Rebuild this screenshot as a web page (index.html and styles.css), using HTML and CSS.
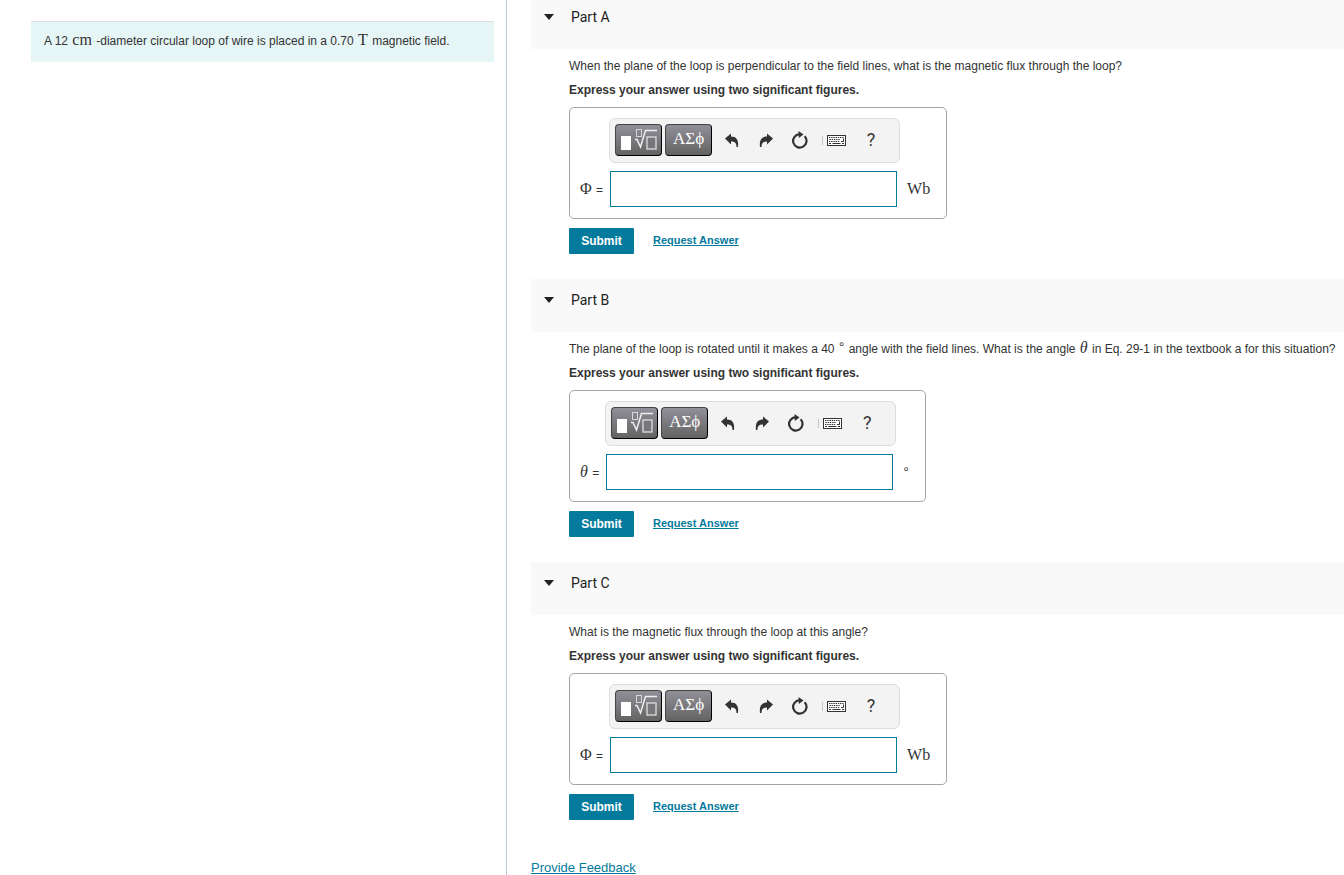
FILE: index.html
```html
<!DOCTYPE html>
<html lang="en">
<head>
    <meta charset="UTF-8">
    <meta name="viewport" content="width=device-width, initial-scale=1.0">
    <title>Magnetic Flux Through a Loop</title>
    <link rel="stylesheet" href="styles.css">
</head>
<body>

    <!-- Shared icons -->
    <svg class="icon-defs" aria-hidden="true">
        <symbol id="icon-templates" viewBox="0 0 36 22">
            <rect x="0" y="8" width="10" height="14" fill="#fff"/>
            <rect x="15.500" y="1.500" width="5" height="7" fill="none" stroke="#d8d8d8"/>
            <path d="M14 11.500h2l3.500 7.500 5-16.500h11.500" fill="none" stroke="#f0f0f0" stroke-width="1.500"/>
            <rect x="26" y="9" width="9" height="12" fill="#77777b" stroke="#d8d8d8" stroke-width="1.400"/>
        </symbol>
        <symbol id="icon-undo" viewBox="0 0 14 14">
            <path d="M0 5.500 6 0.500v3c5 0 8 3 7 10.500h-1.500c0-4-1.500-5.500-5.500-5.500v3z" fill="#333"/>
        </symbol>
        <symbol id="icon-redo" viewBox="0 0 14 14">
            <path d="M14 5.500 8 0.500v3c-5 0-8 3-7 10.500h1.500c0-4 1.500-5.500 5.500-5.500v3z" fill="#333"/>
        </symbol>
        <symbol id="icon-reset" viewBox="0 0 18 18">
            <path d="M13.600 5.200A6.700 6.700 0 1 1 8.500 3.200" fill="none" stroke="#333" stroke-width="2.200"/>
            <path d="M7.500 0 12.500 3.400 7.800 7z" fill="#333"/>
        </symbol>
        <symbol id="icon-keyboard" viewBox="0 0 26 12">
            <path d="M1.500 2v9" stroke="#c4c4c4"/>
            <rect x="6.500" y="1.500" width="18" height="10" fill="#fff" stroke="#333"/>
            <path d="M8 3.500h15M8.500 5.500h11M8 7.500h11" stroke="#333" stroke-dasharray="1.400 .8"/>
            <path d="M20 7.500h2.500v-3M8 9.500h2M11.500 9.500h8M21 9.500h2" fill="none" stroke="#333"/>
        </symbol>
    </svg>

    <div class="container">
        <div class="problem-pane">
            <p class="problem-text">A 12 <span class="math">cm</span> -diameter circular loop of wire is placed in a 0.70 <span class="math">T</span> magnetic field.</p>
        </div>

        <div class="parts-pane">
            <!-- Part A -->
            <section class="part">
                <h2 class="part-header"><button class="part-toggle"><span class="arrow"></span>Part A</button></h2>
                <form class="part-body">
                    <p class="question">When the plane of the loop is perpendicular to the field lines, what is the magnetic flux through the loop?</p>
                    <p class="instruction">Express your answer using two significant figures.</p>
                    <div class="answer-box">
                        <div class="toolbar">
                            <button type="button" class="palette-btn" aria-label="Templates"><svg width="36" height="22"><use href="#icon-templates"/></svg></button>
                            <button type="button" class="palette-btn">ΑΣϕ</button>
                            <div class="tools">
                                <button type="button" class="tool-btn" aria-label="Undo"><svg width="14" height="14"><use href="#icon-undo"/></svg></button>
                                <button type="button" class="tool-btn" aria-label="Redo"><svg width="14" height="14"><use href="#icon-redo"/></svg></button>
                                <button type="button" class="tool-btn" aria-label="Reset"><svg width="18" height="18"><use href="#icon-reset"/></svg></button>
                                <button type="button" class="tool-btn" aria-label="Keyboard shortcuts"><svg width="26" height="12"><use href="#icon-keyboard"/></svg></button>
                                <button type="button" class="tool-btn help">?</button>
                            </div>
                        </div>
                        <label class="answer-label" for="answer-a"><span class="math">Φ</span> =</label>
                        <input id="answer-a" class="answer-input" type="text">
                        <span class="unit math">Wb</span>
                    </div>
                    <div class="actions">
                        <button type="button" class="submit-btn">Submit</button>
                        <a class="request-link" href="#">Request Answer</a>
                    </div>
                </form>
            </section>

            <!-- Part B -->
            <section class="part">
                <h2 class="part-header"><button class="part-toggle"><span class="arrow"></span>Part B</button></h2>
                <form class="part-body">
                    <p class="question">The plane of the loop is rotated until it makes a 40 <sup class="degree">∘</sup> angle with the field lines. What is the angle <i class="math">θ</i> in Eq. 29-1 in the textbook a for this situation?</p>
                    <p class="instruction">Express your answer using two significant figures.</p>
                    <div class="answer-box">
                        <div class="toolbar">
                            <button type="button" class="palette-btn" aria-label="Templates"><svg width="36" height="22"><use href="#icon-templates"/></svg></button>
                            <button type="button" class="palette-btn">ΑΣϕ</button>
                            <div class="tools">
                                <button type="button" class="tool-btn" aria-label="Undo"><svg width="14" height="14"><use href="#icon-undo"/></svg></button>
                                <button type="button" class="tool-btn" aria-label="Redo"><svg width="14" height="14"><use href="#icon-redo"/></svg></button>
                                <button type="button" class="tool-btn" aria-label="Reset"><svg width="18" height="18"><use href="#icon-reset"/></svg></button>
                                <button type="button" class="tool-btn" aria-label="Keyboard shortcuts"><svg width="26" height="12"><use href="#icon-keyboard"/></svg></button>
                                <button type="button" class="tool-btn help">?</button>
                            </div>
                        </div>
                        <label class="answer-label" for="answer-b"><i class="math">θ</i> =</label>
                        <input id="answer-b" class="answer-input" type="text">
                        <span class="unit"><sup class="degree">∘</sup></span>
                    </div>
                    <div class="actions">
                        <button type="button" class="submit-btn">Submit</button>
                        <a class="request-link" href="#">Request Answer</a>
                    </div>
                </form>
            </section>

            <!-- Part C -->
            <section class="part">
                <h2 class="part-header"><button class="part-toggle"><span class="arrow"></span>Part C</button></h2>
                <form class="part-body">
                    <p class="question">What is the magnetic flux through the loop at this angle?</p>
                    <p class="instruction">Express your answer using two significant figures.</p>
                    <div class="answer-box">
                        <div class="toolbar">
                            <button type="button" class="palette-btn" aria-label="Templates"><svg width="36" height="22"><use href="#icon-templates"/></svg></button>
                            <button type="button" class="palette-btn">ΑΣϕ</button>
                            <div class="tools">
                                <button type="button" class="tool-btn" aria-label="Undo"><svg width="14" height="14"><use href="#icon-undo"/></svg></button>
                                <button type="button" class="tool-btn" aria-label="Redo"><svg width="14" height="14"><use href="#icon-redo"/></svg></button>
                                <button type="button" class="tool-btn" aria-label="Reset"><svg width="18" height="18"><use href="#icon-reset"/></svg></button>
                                <button type="button" class="tool-btn" aria-label="Keyboard shortcuts"><svg width="26" height="12"><use href="#icon-keyboard"/></svg></button>
                                <button type="button" class="tool-btn help">?</button>
                            </div>
                        </div>
                        <label class="answer-label" for="answer-c"><span class="math">Φ</span> =</label>
                        <input id="answer-c" class="answer-input" type="text">
                        <span class="unit math">Wb</span>
                    </div>
                    <div class="actions">
                        <button type="button" class="submit-btn">Submit</button>
                        <a class="request-link" href="#">Request Answer</a>
                    </div>
                </form>
            </section>

            <a class="feedback-link" href="#">Provide Feedback</a>
        </div>
    </div>

</body>
</html>
```
FILE: styles.css
```css
* {
    box-sizing: border-box;
}

body {
    margin: 0;
    font-family: 'Liberation Sans', Arial, sans-serif;
    font-size: 12px;
    color: #333;
    background-color: #fff;
}

p,
h2 {
    margin: 0;
}

button {
    font-family: inherit;
    padding: 0;
    cursor: pointer;
}

.icon-defs {
    display: none;
}

.container {
    display: grid;
    grid-template-columns: 507px minmax(0, 1fr);
    min-height: 100vh;
}

/* Left side */
.problem-pane {
    padding: 21px 12px 0 31px;
    border-right: 1px solid #b4c8d8;
}

.problem-text {
    padding: 7px 13px 9px;
    line-height: 24px;
    border-top: 1px solid #d9dede;
    background-color: #e6f5f6;
}

.math {
    padding: 0 1px;
    font-family: 'Liberation Serif', 'Times New Roman', serif;
    font-size: 16px;
    line-height: 1;
}

/* Right side */
.parts-pane {
    padding-left: 24px;
    overflow: hidden;
}

.part-header {
    padding: 11px 12px 22px;
    background-color: #f9f9f9;
}

.part:first-child .part-header {
    padding-top: 7px;
}

.part-toggle {
    display: flex;
    align-items: center;
    gap: 17px;
    height: 20px;
    border: none;
    background: none;
    color: #222;
    font-family: Roboto, sans-serif;
    font-size: 14px;
}

.arrow {
    margin-left: 1px;
    border: 5px solid transparent;
    border-top: 6px solid #222;
    border-bottom: none;
}

.part-body {
    padding: 5px 0 25px 38px;
}

.question,
.instruction {
    height: 24px;
    line-height: 24px;
    white-space: nowrap;
}

.instruction {
    font-weight: bold;
}

.degree {
    font-family: 'DejaVu Sans', sans-serif;
    font-size: 12px;
    line-height: 1;
}

.answer-box {
    display: inline-grid;
    grid-template-columns: auto auto auto;
    align-items: center;
    gap: 8px 6px;
    margin-top: 5px;
    padding: 10px 15px 11px 9px;
    border: 1px solid #a5a5a5;
    border-radius: 5px;
    vertical-align: top;
}

.toolbar {
    grid-column: 2;
    display: flex;
    align-items: center;
    gap: 3px;
    width: 291px;
    height: 45px;
    padding: 0 5px 2px;
    border: 1px solid #ddd;
    border-radius: 6px;
    background-color: #f3f3f3;
}

.palette-btn {
    display: flex;
    align-items: center;
    justify-content: center;
    width: 47px;
    height: 32px;
    padding-bottom: 2px;
    border: 1px solid #000;
    border-top-color: #444;
    border-left-color: #444;
    border-radius: 4px;
    background: linear-gradient(#918f98, #636363);
    color: #fff;
    font-family: 'Liberation Serif', serif;
    font-size: 17px;
}

.tools {
    display: flex;
    align-items: center;
}

.tool-btn {
    display: flex;
    align-items: center;
    justify-content: center;
    width: 34px;
    height: 32px;
    border: none;
    background: none;
    color: #333;
}

.help {
    width: 40px;
    font-family: Roboto, sans-serif;
    font-size: 18px;
}

.answer-label {
    grid-column: 1;
    white-space: nowrap;
}

.answer-input {
    width: 287px;
    height: 36px;
    margin-left: 1px;
    padding: 0 8px;
    border: 1px solid #047a9c;
    font-size: 16px;
}

.actions {
    display: flex;
    align-items: center;
    gap: 19px;
    margin-top: 9px;
}

.submit-btn {
    width: 65px;
    height: 26px;
    padding-bottom: 1px;
    border: none;
    border-radius: 1px;
    background-color: #047a9c;
    color: #fff;
    font-size: 12px;
    font-weight: bold;
}

.request-link {
    padding-bottom: 2px;
    color: #047a9c;
    font-size: 11px;
    font-weight: bold;
}

.feedback-link {
    display: inline-block;
    margin-top: 15px;
    color: #047a9c;
    font-size: 13px;
    line-height: 15px;
}
```
